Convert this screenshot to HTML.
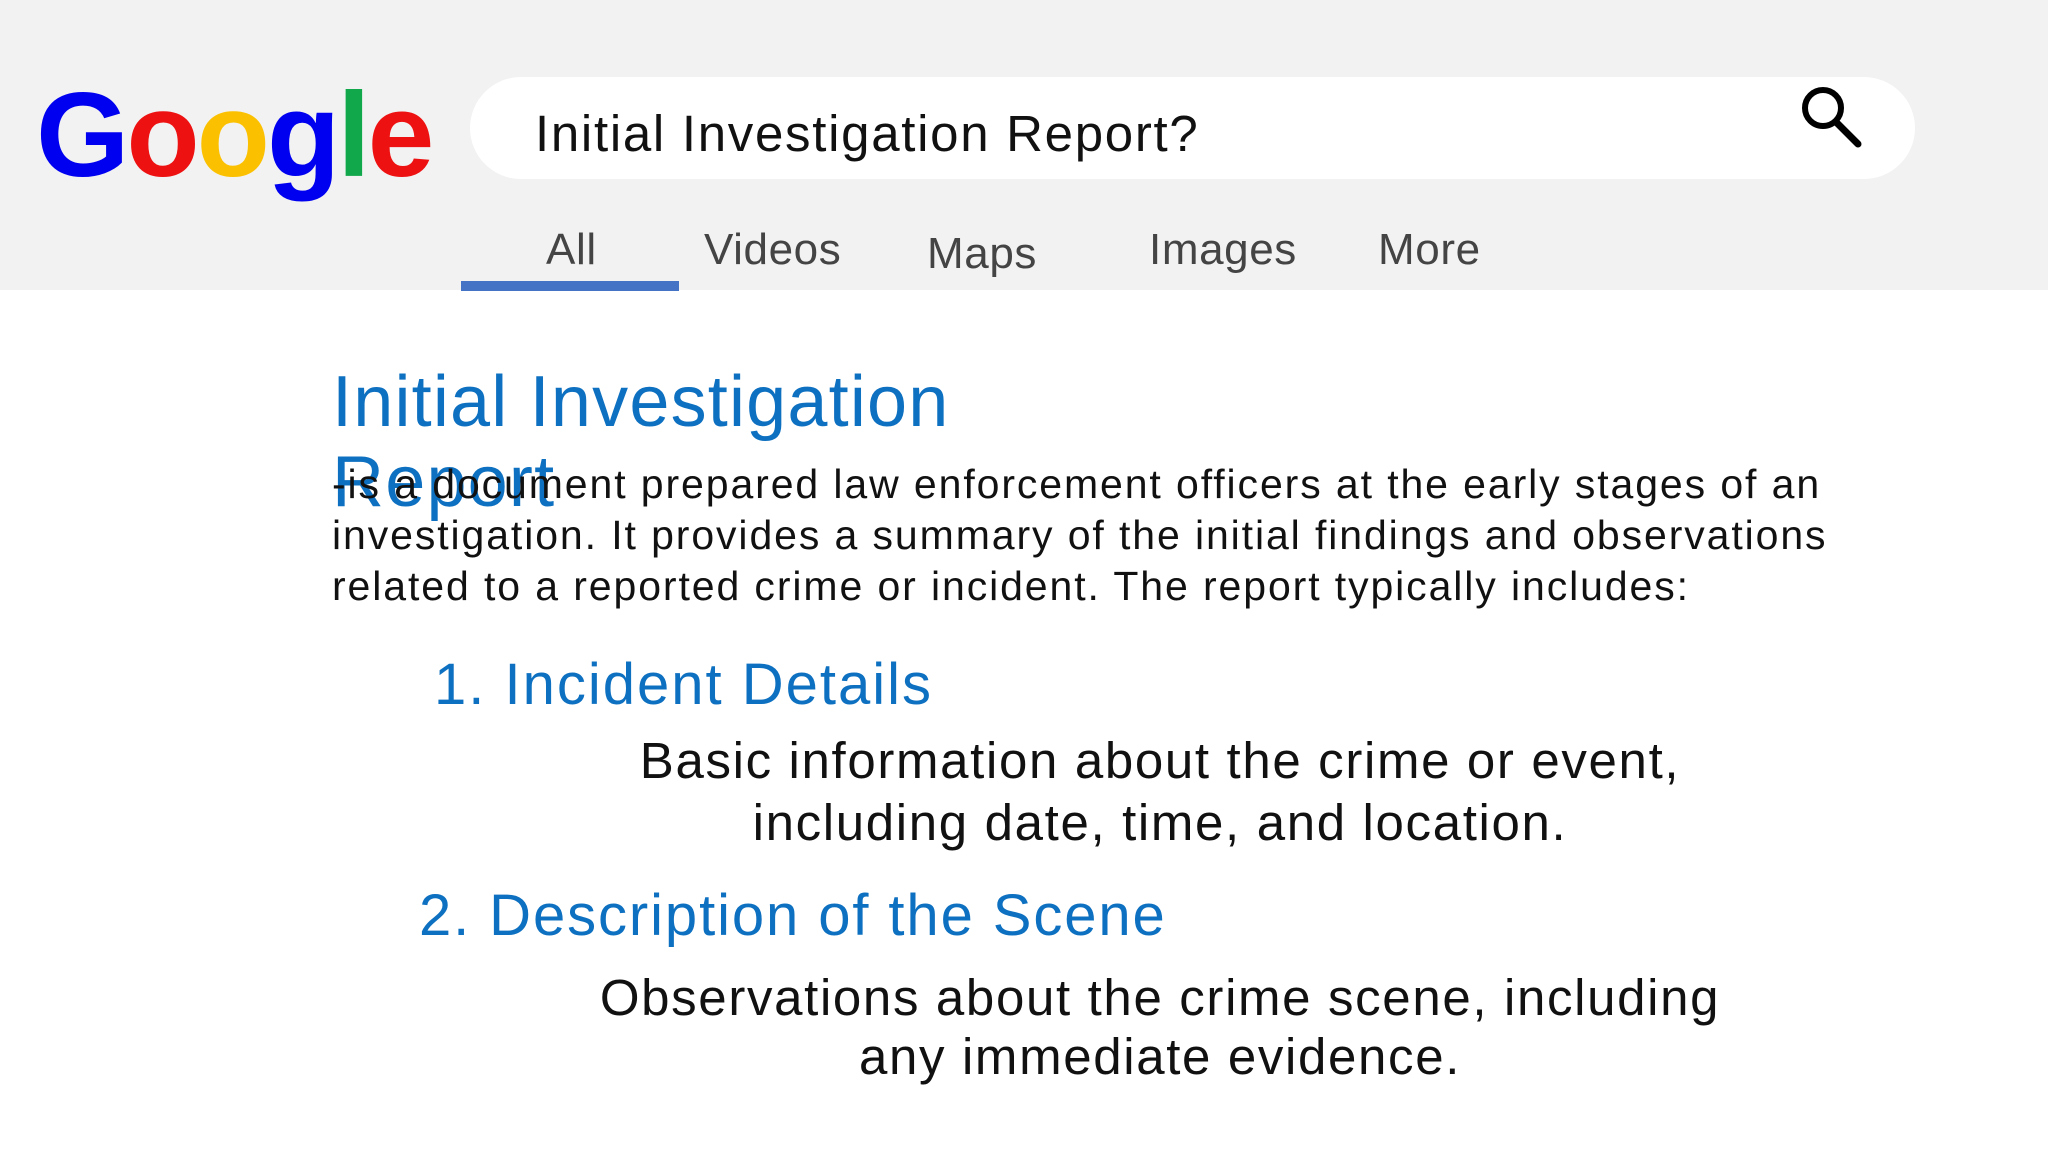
<!DOCTYPE html>
<html><head><meta charset="utf-8"><style>
*{margin:0;padding:0}
body{width:2048px;height:1152px;position:relative;background:#fff;font-family:"Liberation Sans",sans-serif;overflow:hidden}
.a{position:absolute;line-height:1;white-space:nowrap}
.hdr{position:absolute;left:0;top:0;width:2048px;height:290px;background:#f2f2f2}
.box{position:absolute;left:470px;top:77px;width:1445px;height:102px;background:#fff;border-radius:51px}
.tab{font-size:44px;color:#444;top:228px;letter-spacing:0.6px}
.blue{color:#0e70c0}
.dk{color:#111}
.c{left:0;width:2320px;text-align:center}
.p{font-size:41px;left:332px;letter-spacing:1.9px}
.b{font-size:51px;letter-spacing:1.65px}
</style></head><body>
<div class="hdr"></div>
<div class="box"></div>
<div class="a" style="left:36px;top:75px;font-size:120px;font-weight:bold;letter-spacing:-3px"><span style="color:#0000f0">G</span><span style="color:#ee1111">o</span><span style="color:#fbc000">o</span><span style="color:#0000f0">g</span><span style="color:#10a84a">l</span><span style="color:#ee1111">e</span></div>
<div class="a dk" style="left:535px;top:108px;font-size:51px;letter-spacing:1.7px">Initial Investigation Report?</div>
<svg class="a" style="left:1790px;top:78px" width="80" height="80" viewBox="0 0 80 80"><circle cx="33" cy="30" r="18" fill="none" stroke="#000" stroke-width="6"/><line x1="46" y1="44" x2="68" y2="66" stroke="#000" stroke-width="7" stroke-linecap="round"/></svg>
<div class="a tab" style="left:546px">All</div>
<div class="a tab" style="left:704px">Videos</div>
<div class="a tab" style="left:927px;top:232px">Maps</div>
<div class="a tab" style="left:1149px">Images</div>
<div class="a tab" style="left:1378px">More</div>
<div class="a" style="left:461px;top:281px;width:218px;height:10px;background:#4472c4"></div>
<div class="a blue" style="left:332px;top:366px;font-size:72px;letter-spacing:1.2px">Initial Investigation</div>
<div class="a blue" style="left:332px;top:446px;font-size:72px;letter-spacing:1.2px">Report</div>
<div class="a dk p" style="top:464px">-is a document prepared law enforcement officers at the early stages of an</div>
<div class="a dk p" style="top:515px">investigation. It provides a summary of the initial findings and observations</div>
<div class="a dk p" style="top:566px">related to a reported crime or incident. The report typically includes:</div>
<div class="a blue" style="left:434px;top:656px;font-size:58px;letter-spacing:2px">1. Incident Details</div>
<div class="a dk c b" style="top:735px">Basic information about the crime or event,</div>
<div class="a dk c b" style="top:797px">including date, time, and location.</div>
<div class="a blue" style="left:419px;top:887px;font-size:58px;letter-spacing:1.9px">2. Description of the Scene</div>
<div class="a dk c b" style="top:972px">Observations about the crime scene, including</div>
<div class="a dk c b" style="top:1031px">any immediate evidence.</div>
</body></html>
